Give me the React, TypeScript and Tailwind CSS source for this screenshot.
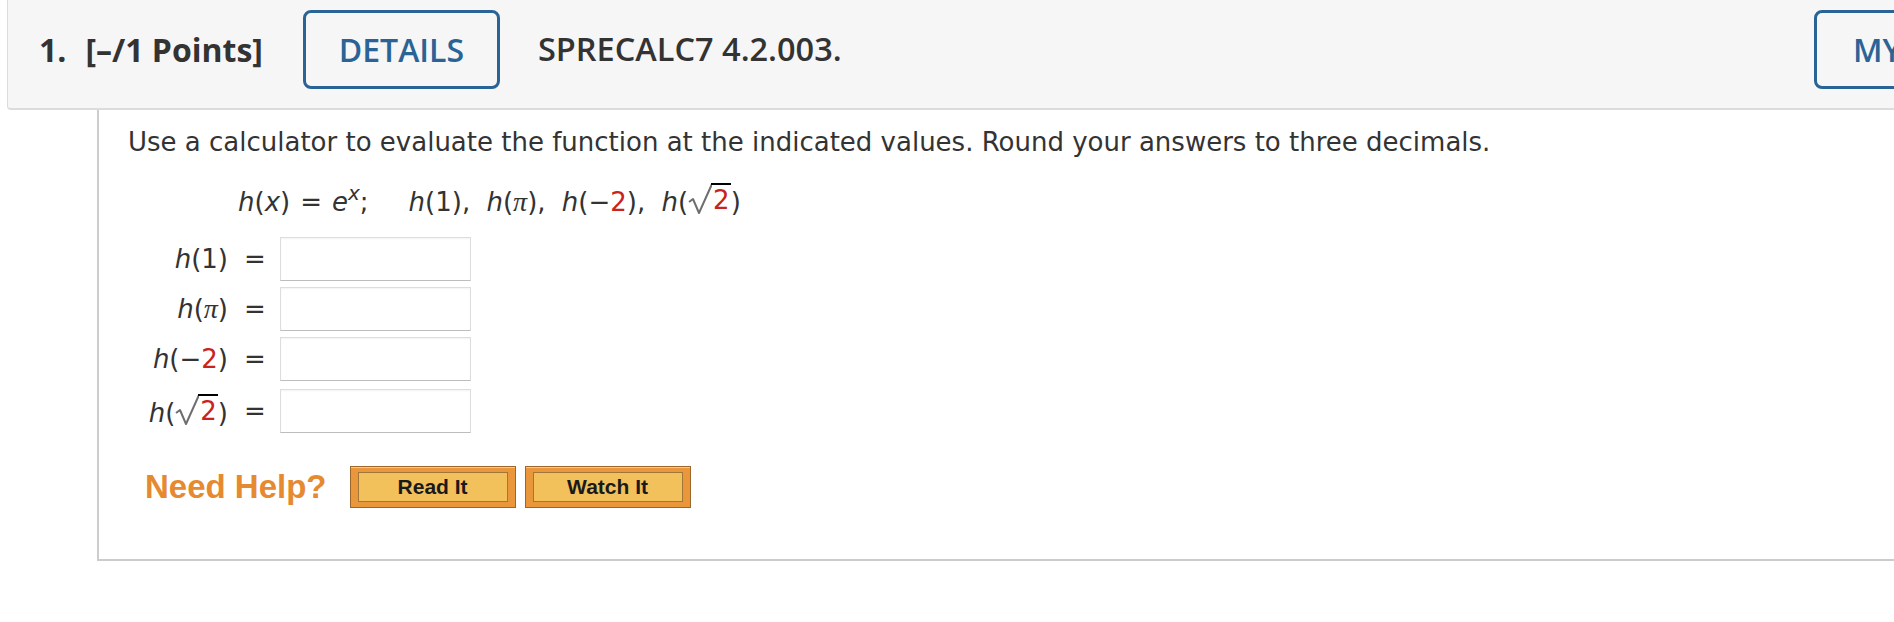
import React from 'react';

const q = { fontFamily: '"DejaVu Sans", Verdana, sans-serif' };
const serifPi = { fontFamily: '"Liberation Serif", "Times New Roman", serif' };

const Pi = () => (
  <i className="text-[28px] leading-none" style={serifPi}>
    π
  </i>
);

const Sqrt2 = () => (
  <span className="inline-flex items-end not-italic align-[-4px]">
    <svg width="24" height="32" viewBox="0 0 24 32" className="mr-[-1px]">
      <polyline points="1,19 5,16 11,30 24,1" fill="none" stroke="#6e6e6e" strokeWidth="2" strokeLinejoin="round" />
    </svg>
    <span className="border-t-2 border-black text-[#c8241d] leading-[30px] pl-[2px] pr-[1px]">2</span>
  </span>
);

const Comma = () => <span className="mr-[8px]">,</span>;

const rows: { label: React.ReactNode }[] = [
  { label: <><i>h</i>(1)</> },
  { label: <><i>h</i>(<Pi />)</> },
  { label: <><i>h</i>(−<span className="text-[#c8241d]">2</span>)</> },
  { label: <><i>h</i>(<Sqrt2 />)</> },
];

const HelpButton = ({ label }: { label: string }) => (
  <button className="w-[166px] h-[42px] border border-[#9b672c] bg-[#ea973c] px-[7px] py-[5px] shadow-[inset_0_1px_0_#f7c98c]">
    <div
      className="h-full border border-[#a0763a] bg-[#f3c15c] flex items-center justify-center text-[21px] font-bold text-[#1a1a1a]"
      style={{ fontFamily: '"Liberation Sans", Arial, sans-serif' }}
    >
      {label}
    </div>
  </button>
);

export default function App() {
  return (
    <div className="w-full h-[622px] bg-white overflow-hidden text-[#333]">
      {/* question header */}
      <div
        className="ml-[7px] h-[110px] bg-[#f6f6f6] border-l border-b-2 border-[#dcdcdc] rounded-bl-[4px] flex items-start pt-[10px] pl-[31px] whitespace-nowrap"
        style={{ fontFamily: '"Open Sans", sans-serif' }}
      >
        <div className="h-[79px] flex items-center text-[32px] font-bold text-[#333]">
          <span>1.</span>
          <span className="ml-[19px]">[–/1 Points]</span>
        </div>
        <button className="ml-[40px] w-[197px] h-[79px] border-[3px] border-[#2a6496] rounded-[8px] text-[32px] font-semibold text-[#2a6496] flex items-center justify-center">
          DETAILS
        </button>
        <div className="ml-[38px] h-[79px] flex items-center text-[32.5px] font-semibold text-[#333]">
          SPRECALC7 4.2.003.
        </div>
        <div className="flex-1" />
        <button className="w-[200px] -mr-[120px] h-[79px] border-[3px] border-[#2a6496] rounded-[8px] text-[32px] font-semibold text-[#2a6496] flex items-center pl-[36px] shrink-0">
          MY NOTES
        </button>
      </div>

      {/* question body */}
      <div className="ml-[97px] h-[451px] border-l-2 border-b-2 border-[#cccccc]" style={q}>
        <p className="pl-[29px] pt-[17px] text-[26px] leading-[30px] text-[#333] whitespace-nowrap">
          Use a calculator to evaluate the function at the indicated values. Round your answers to three decimals.
        </p>
        <p className="pl-[139px] mt-[26px] h-[32px] text-[26px] leading-[32px] text-[#333] whitespace-nowrap">
          <i>h</i>(<i>x</i>)<span className="mx-[10px]">=</span><i>e</i>
          <sup className="text-[20px] -top-[11px]"><i>x</i></sup>;
          <span className="ml-[40px]">
            <i>h</i>(1)<Comma /> <i>h</i>(<Pi />)<Comma /> <i>h</i>(−<span className="text-[#c8241d]">2</span>)<Comma />{' '}
            <i>h</i>(<Sqrt2 />)
          </span>
        </p>

        <div className="mt-[22px] flex flex-col gap-[6px]">
          {rows.map((r, i) => (
            <div key={i} className={`flex items-center h-[44px] ${i === 3 ? 'mt-[2px]' : ''}`}>
              <div className="w-[129px] text-right text-[26px] leading-[32px] text-[#333] whitespace-nowrap">{r.label}</div>
              <span className="ml-[16px] text-[26px] text-[#333]">=</span>
              <input className="ml-[14px] w-[191px] h-[44px] border border-[#dddddd] border-b-[#bdbdbd] shadow-[inset_0_1px_2px_rgba(0,0,0,0.05)] bg-white outline-none" />
            </div>
          ))}
        </div>

        <div className="mt-[29px] pl-[46px] flex items-center">
          <span
            className="text-[33px] font-bold text-[#e58a31] mr-[23px]"
            style={{ fontFamily: '"Liberation Sans", Arial, sans-serif' }}
          >
            Need Help?
          </span>
          <HelpButton label="Read It" />
          <div className="w-[9px]" />
          <HelpButton label="Watch It" />
        </div>
      </div>
    </div>
  );
}
